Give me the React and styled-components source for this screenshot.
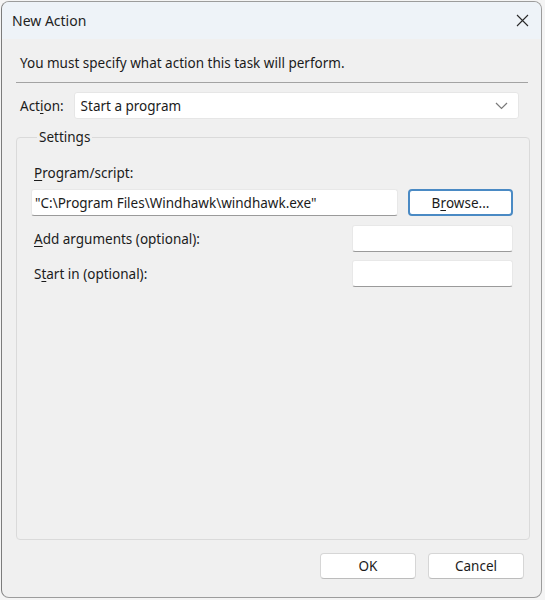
import React from 'react';
import styled, { createGlobalStyle } from 'styled-components';

const Global = createGlobalStyle`
  html, body {
    margin: 0;
    background: #f4f4f4;
  }
  body {
    font-family: "Noto Sans", "Open Sans", sans-serif;
    font-size: 13.5px;
    color: #1b1b1b;
  }
`;

const Window = styled.div`
  box-sizing: border-box;
  width: 541px;
  height: 597px;
  margin: 1px 3px 2px 1px;
  border: 1px solid #9c9c9c;
  border-left-color: #7c7c7c;
  border-radius: 8px;
  background: #f0f0f0;
  overflow: hidden;
  display: flex;
  flex-direction: column;
`;

const TitleBar = styled.div`
  height: 37px;
  flex: none;
  display: flex;
  align-items: center;
  justify-content: space-between;
  padding: 0 12px 0 10px;
  background: #eef3f8;
`;

const Title = styled.span`
  font-size: 14px;
  color: #1f1f1f;
`;

const Body = styled.div`
  flex: 1;
  display: flex;
  flex-direction: column;
  padding: 0 13px 0 14px;
`;

const Instruction = styled.div`
  margin: 14px 0 0 4px;
  line-height: 20px;
`;

const Separator = styled.div`
  height: 1px;
  margin-top: 9px;
  background: #a3a3a3;
`;

const ActionRow = styled.div`
  display: flex;
  align-items: center;
  margin-top: 9px;
  padding-right: 9px;
`;

const Label = styled.span`
  margin-left: ${p => p.$indent || 0}px;
  line-height: 20px;
  white-space: nowrap;

  u {
    text-underline-offset: 2px;
  }
`;

const Select = styled.div`
  flex: 1;
  box-sizing: border-box;
  height: 27px;
  margin-left: 10px;
  display: flex;
  align-items: center;
  justify-content: space-between;
  padding: 0 10px 0 6px;
  background: #ffffff;
  border: 1px solid #e6e6e6;
  border-radius: 3px;
`;

const Group = styled.fieldset`
  flex: 1;
  margin: 9px -2px 0 0;
  padding: 17px 16px 0 14px;
  border: 1px solid #dadada;
  border-radius: 4px;
  display: flex;
  flex-direction: column;
  min-width: 0;

  legend {
    padding: 0 2px;
    margin-left: 6px;
    line-height: 18px;
  }
`;

const Input = styled.div`
  box-sizing: border-box;
  height: 27px;
  width: ${p => (p.$width ? `${p.$width}px` : 'auto')};
  flex: ${p => (p.$width ? 'none' : 1)};
  display: flex;
  align-items: center;
  padding: 0 3px;
  background: #ffffff;
  border: 1px solid #e8e8e8;
  border-bottom-color: #9a9a9a;
  border-radius: 3px;
  white-space: nowrap;
  overflow: hidden;
`;

const FieldRow = styled.div`
  display: flex;
  align-items: center;
  justify-content: space-between;
  gap: 10px;
  margin-top: ${p => p.$gap || 0}px;
`;

const Button = styled.div`
  box-sizing: border-box;
  width: ${p => p.$width || 96}px;
  height: ${p => (p.$focus ? 27 : 26)}px;
  display: flex;
  align-items: center;
  justify-content: center;
  background: #ffffff;
  border: ${p => (p.$focus ? '2px solid #4a8ac4' : '1px solid #d6d6d6')};
  border-bottom-color: ${p => (p.$focus ? '#4a8ac4' : '#bcbcbc')};
  border-radius: 4px;

  u {
    text-underline-offset: 2px;
  }
`;

const Footer = styled.div`
  display: flex;
  justify-content: flex-end;
  gap: 12px;
  padding: 13px 4px 18px 0;
`;

const Chevron = () => (
  <svg width="13" height="8" viewBox="0 0 13 8">
    <polyline points="1,1 6.5,6.5 12,1" fill="none" stroke="#7a7a7a" strokeWidth="1.2" />
  </svg>
);

const CloseIcon = () => (
  <svg width="13" height="13" viewBox="0 0 13 13">
    <path d="M1 1 L12 12 M12 1 L1 12" stroke="#2a2a2a" strokeWidth="1.1" />
  </svg>
);

export default function App() {
  return (
    <>
      <Global />
      <Window>
        <TitleBar>
          <Title>New Action</Title>
          <CloseIcon />
        </TitleBar>
        <Body>
          <Instruction>You must specify what action this task will perform.</Instruction>
          <Separator />
          <ActionRow>
            <Label $indent={4}>Act<u>i</u>on:</Label>
            <Select>
              <span>Start a program</span>
              <Chevron />
            </Select>
          </ActionRow>
          <Group>
            <legend>Settings</legend>
            <Label $indent={3}><u>P</u>rogram/script:</Label>
            <FieldRow $gap={6}>
              <Input>"C:\Program Files\Windhawk\windhawk.exe"</Input>
              <Button $focus $width={105}>B<u>r</u>owse...</Button>
            </FieldRow>
            <FieldRow $gap={9}>
              <Label $indent={3}><u>A</u>dd arguments (optional):</Label>
              <Input $width={161} />
            </FieldRow>
            <FieldRow $gap={8}>
              <Label $indent={3}>S<u>t</u>art in (optional):</Label>
              <Input $width={161} />
            </FieldRow>
          </Group>
          <Footer>
            <Button>OK</Button>
            <Button>Cancel</Button>
          </Footer>
        </Body>
      </Window>
    </>
  );
}
